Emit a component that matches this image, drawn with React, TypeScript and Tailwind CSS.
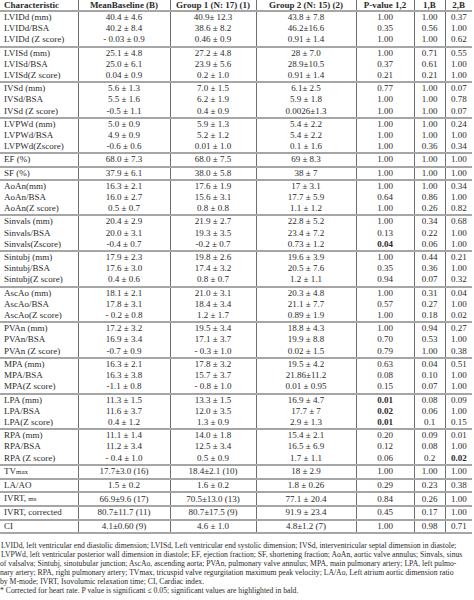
import React from 'react';

type Cell = string | { b: string };
type Row = [string, Cell, Cell, Cell, Cell, Cell, Cell];

const groups: Row[][] = [
  [
    ['LVIDd (mm)', '40.4 ± 4.6', '40.9± 12.3', '43.8 ± 7.8', '1.00', '1.00', '0.37'],
    ['LVIDd/BSA', '40.2 ± 8.4', '38.6 ± 8.2', '46.2±16.6', '0.35', '0.56', '1.00'],
    ['LVIDd (Z score)', '- 0.03 ± 0.9', '0.46 ± 0.9', '0.91 ± 1.4', '1.00', '1.00', '0.62'],
  ],
  [
    ['LVISd (mm)', '25.1 ± 4.8', '27.2 ± 4.8', '28 ± 7.0', '1.00', '0.71', '0.55'],
    ['LVISd/BSA', '25.0 ± 6.1', '23.9 ± 5.6', '28.9±10.5', '0.37', '0.61', '1.00'],
    ['LVISd(Z score)', '0.04 ± 0.9', '0.2 ± 1.0', '0.91 ± 1.4', '0.21', '0.21', '1.00'],
  ],
  [
    ['IVSd (mm)', '5.6 ± 1.3', '7.0 ± 1.5', '6.1± 2.5', '0.77', '1.00', '0.07'],
    ['IVSd/BSA', '5.5 ± 1.6', '6.2 ± 1.9', '5.9 ± 1.8', '1.00', '1.00', '0.78'],
    ['IVSd (Z score)', '-0.5 ± 1.1', '0.4 ± 0.9', '0.0026±1.3', '1.00', '1.00', '0.07'],
  ],
  [
    ['LVPWd (mm)', '5.0 ± 0.9', '5.9 ± 1.3', '5.4 ± 2.2', '1.00', '1.00', '0.24'],
    ['LVPWd/BSA', '4.9 ± 0.9', '5.2 ± 1.2', '5.4 ± 2.2', '1.00', '1.00', '1.00'],
    ['LVPWd(Zscore)', '-0.6 ± 0.6', '0.01 ± 1.0', '0.1 ± 1.6', '1.00', '0.36', '0.34'],
  ],
  [['EF (%)', '68.0 ± 7.3', '68.0 ± 7.5', '69 ± 8.3', '1.00', '1.00', '1.00']],
  [['SF (%)', '37.9 ± 6.1', '38.0 ± 5.8', '38 ± 7', '1.00', '1.00', '1.00']],
  [
    ['AoAn(mm)', '16.3 ± 2.1', '17.6 ± 1.9', '17 ± 3.1', '1.00', '1.00', '0.34'],
    ['AoAn/BSA', '16.0 ± 2.7', '15.6 ± 3.1', '17.7 ± 5.9', '0.64', '0.86', '1.00'],
    ['AoAn(Z score)', '0.5 ± 0.7', '0.8 ± 0.8', '1.1 ± 1.2', '1.00', '0.26', '0.82'],
  ],
  [
    ['Sinvals (mm)', '20.4 ± 2.9', '21.9 ± 2.7', '22.8 ± 5.2', '1.00', '0.34', '0.68'],
    ['Sinvals/BSA', '20.0 ± 3.1', '19.3 ± 3.5', '23.4 ± 7.2', '0.13', '0.22', '1.00'],
    ['Sinvals(Zscore)', '-0.4 ± 0.7', '-0.2 ± 0.7', '0.73 ± 1.2', { b: '0.04' }, '0.06', '1.00'],
  ],
  [
    ['Sintubj (mm)', '17.9 ± 2.3', '19.8 ± 2.6', '19.6 ± 3.9', '1.00', '0.44', '0.21'],
    ['Sintubj/BSA', '17.6 ± 3.0', '17.4 ± 3.2', '20.5 ± 7.6', '0.35', '0.36', '1.00'],
    ['Sintubj(Z score)', '0.4 ± 0.6', '0.8 ± 0.7', '1.2 ± 1.1', '0.94', '0.07', '0.32'],
  ],
  [
    ['AscAo (mm)', '18.1 ± 2.1', '21.0 ± 3.1', '20.3 ± 4.8', '1.00', '0.31', '0.04'],
    ['AscAo/BSA', '17.8 ± 3.1', '18.4 ± 3.4', '21.1 ± 7.7', '0.57', '0.27', '1.00'],
    ['AscAo(Z score)', '- 0.2 ± 0.8', '1.2 ± 1.7', '0.89 ± 1.9', '1.00', '0.18', '0.02'],
  ],
  [
    ['PVAn (mm)', '17.2 ± 3.2', '19.5 ± 3.4', '18.8 ± 4.3', '1.00', '0.94', '0.27'],
    ['PVAn/BSA', '16.9 ± 3.4', '17.1 ± 3.7', '19.9 ± 8.8', '0.70', '0.53', '1.00'],
    ['PVAn (Z score)', '-0.7 ± 0.9', '- 0.3 ± 1.0', '0.02 ± 1.5', '0.79', '1.00', '0.38'],
  ],
  [
    ['MPA (mm)', '16.3 ± 2.1', '17.8 ± 3.2', '19.5 ± 4.2', '0.63', '0.04', '0.51'],
    ['MPA/BSA', '16.3 ± 3.8', '15.7 ± 3.7', '21.86±11.2', '0.08', '0.10', '1.00'],
    ['MPA(Z score)', '-1.1 ± 0.8', '- 0.8 ± 1.0', '0.01 ± 0.95', '0.15', '0.07', '1.00'],
  ],
  [
    ['LPA (mm)', '11.3 ± 1.5', '13.3 ± 1.5', '16.9 ± 4.7', { b: '0.01' }, '0.08', '0.09'],
    ['LPA/BSA', '11.6 ± 3.7', '12.0 ± 3.5', '17.7 ± 7', { b: '0.02' }, '0.06', '1.00'],
    ['LPA(Z score)', '0.4 ± 1.2', '1.3 ± 0.9', '2.9 ± 1.3', { b: '0.01' }, '0.1', '0.15'],
  ],
  [
    ['RPA (mm)', '11.1 ± 1.4', '14.0 ± 1.8', '15.4 ± 2.1', '0.20', '0.09', '0.01'],
    ['RPA/BSA', '11.2 ± 3.4', '12.5 ± 3.4', '16.5 ± 6.9', '0.12', '0.08', '1.00'],
    ['RPA (Z score)', '- 0.4 ± 1.0', '0.5 ± 0.9', '1.7 ± 1.1', '0.06', '0.2', { b: '0.02' }],
  ],
  [['TV|max', '17.7±3.0 (16)', '18.4±2.1 (10)', '18 ± 2.9', '1.00', '1.00', '1.00']],
  [['LA/AO', '1.5 ± 0.2', '1.6 ± 0.2', '1.8 ± 0.26', '0.29', '0.23', '0.38']],
  [['IVRT, |ms', '66.9±9.6 (17)', '70.5±13.0 (13)', '77.1 ± 20.4', '0.84', '0.26', '1.00']],
  [['IVRT, corrected', '80.7±11.7 (11)', '80.7±17.5 (9)', '91.9 ± 23.4', '0.45', '0.17', '1.00']],
  [['CI', '4.1±0.60 (9)', '4.6 ± 1.0', '4.8±1.2 (7)', '1.00', '0.98', '0.71']],
];

const headers = ['Characteristic', 'MeanBaseline (B)', 'Group 1 (N: 17) (1)', 'Group 2 (N: 15) (2)', 'P-value 1,2', '1,B', '2,B'];
const widths = ['w-[78px]', 'w-[92px]', 'w-[86px]', 'w-[100px]', 'w-[58px]', 'w-[31px]', 'w-[27px]'];

// "TV|max" -> TV with a smaller "max"
const label = (s: string) => {
  const [main, small] = s.split('|');
  return (
    <>
      {main}
      {small && <span className="text-[7px]">{small}</span>}
    </>
  );
};

const value = (c: Cell) => (typeof c === 'string' ? c : <span className="font-bold">{c.b}</span>);

const notes = [
  'LVIDd, left ventricular end diastolic dimension; LVISd, Left ventricular end systolic dimension; IVSd, interventricular septal dimension in diastole;',
  'LVPWd, left ventricular posterior wall dimension in diastole; EF, ejection fraction; SF, shortening fraction; AoAn, aortic valve annulus; Sinvals, sinus',
  'of valsalva; Sintubj, sinotubular junction; AscAo, ascending aorta; PVAn, pulmonary valve annulus; MPA, main pulmonary artery; LPA, left pulmo-',
  'nary artery; RPA, right pulmonary artery; TVmax, tricuspid valve regurgitation maximum peak velocity; LA/Ao, Left atrium aortic dimension ratio',
  'by M-mode; IVRT, Isovolumic relaxation time; CI, Cardiac index.',
  '* Corrected for heart rate. P value is significant ≤ 0.05; significant values are highlighted in bald.',
];

export default function App() {
  return (
    <div className="w-[474px] h-[600px] overflow-hidden bg-white text-[#2b2b2b] font-['Liberation_Serif',serif]">
      <table className="w-[472px] table-fixed border-collapse text-[9px] leading-[11.2px]">
        <colgroup>
          {widths.map((w, i) => (
            <col key={i} className={w} />
          ))}
        </colgroup>
        <thead>
          <tr className="border-b-2 border-[#a6a6a6]">
            {headers.map((h, i) => (
              <th
                key={h}
                className={`h-[10px] p-0 font-bold leading-[10px] whitespace-nowrap ${
                  i === 0 ? 'text-left pl-[4px]' : 'text-center border-l border-[#6f6f6f]'
                }`}
              >
                {h}
              </th>
            ))}
          </tr>
        </thead>
        <tbody>
          {groups.map((g, gi) => (
            <tr key={gi} className="border-b-2 border-[#a6a6a6]">
              {[0, 1, 2, 3, 4, 5, 6].map((ci) => (
                <td
                  key={ci}
                  className={`p-0 align-middle whitespace-nowrap ${
                    ci === 0 ? 'text-left pl-[4px]' : 'text-center border-l border-[#6f6f6f]'
                  }`}
                >
                  {g.map((r, ri) => (
                    <div key={ri}>{ci === 0 ? label(r[0]) : value(r[ci])}</div>
                  ))}
                </td>
              ))}
            </tr>
          ))}
        </tbody>
      </table>
      <div className="mt-[7px] text-[7.7px] leading-[9px] text-[#2b2b2b]">
        {notes.map((n, i) => (
          <div key={i} className={`whitespace-nowrap ${i < 2 ? 'pl-[1px]' : ''}`}>
            {n}
          </div>
        ))}
      </div>
    </div>
  );
}
